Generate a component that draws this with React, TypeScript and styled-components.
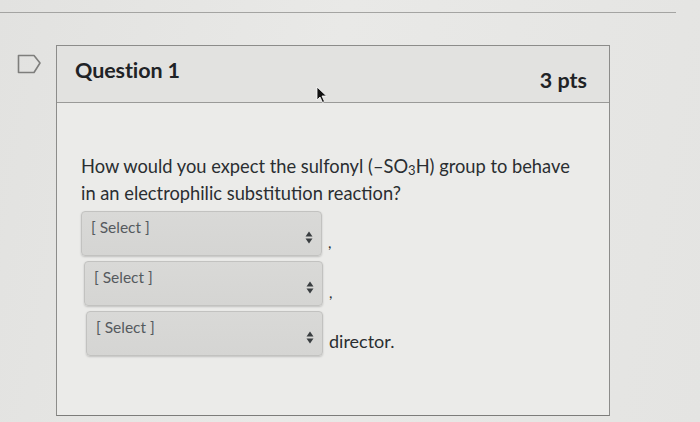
import React from "react";
import styled, { createGlobalStyle } from "styled-components";

const Global = createGlobalStyle`
  html, body { margin: 0; padding: 0; }
  body {
    width: 700px;
    height: 422px;
    overflow: hidden;
    background: #e4e4e2;
    font-family: Lato, "Open Sans", sans-serif;
    color: #2d3b45;
  }
`;

const Page = styled.div`
  position: relative;
  width: 700px;
  height: 422px;
  padding-top: 12px;
  box-sizing: border-box;
  background: linear-gradient(100deg, #e2e2e0 0%, #e9e9e7 45%, #e4e4e2 100%);
`;

const TopRule = styled.div`
  width: 676px;
  height: 1px;
  background: #a4a4a2;
`;

const Row = styled.div`
  display: flex;
  align-items: flex-start;
  margin-top: 32px;
`;

const FlagCol = styled.div`
  width: 56px;
  display: flex;
  justify-content: center;
  padding-top: 9px;
  padding-left: 3px;
  box-sizing: border-box;
`;

const Card = styled.section`
  width: 554px;
  height: 371px;
  border: 1px solid #8c8c8a;
  border-bottom-color: #7c7c7a;
  background: #ebebe9;
  box-sizing: border-box;
  display: flex;
  flex-direction: column;
`;

const Header = styled.header`
  height: 57px;
  flex: none;
  display: flex;
  align-items: center;
  justify-content: space-between;
  padding: 0 22px 0 18px;
  background: #e2e2e0;
  border-bottom: 1px solid #9a9a98;
  box-sizing: border-box;
`;

const Title = styled.h2`
  margin: 0;
  font-size: 21.5px;
  font-weight: 700;
  color: #1f2326;
  letter-spacing: -0.1px;
  transform: translateY(-4px);
`;

const Points = styled.span`
  font-size: 21.5px;
  font-weight: 700;
  color: #1f2326;
  transform: translateY(6px);
`;

const Body = styled.div`
  padding: 52px 0 0 24px;
  display: flex;
  flex-direction: column;
`;

const Prompt = styled.p`
  margin: 0;
  font-size: 18.3px;
  line-height: 23px;
  color: #2a2e31;
`;

const Selects = styled.div`
  margin-top: 6px;
  display: flex;
  flex-direction: column;
  gap: 5px;
`;

const SelectRow = styled.div<{ $indent: number }>`
  display: flex;
  align-items: flex-end;
  padding-left: ${(p) => p.$indent}px;
`;

const SelectBox = styled.div<{ $width: number }>`
  width: ${(p) => p.$width}px;
  height: 45px;
  box-sizing: border-box;
  border: 1px solid #c2c2c0;
  border-radius: 4px;
  background: linear-gradient(180deg, #d9d9d7 0%, #d5d5d3 100%);
  box-shadow: 0 1px 2px rgba(0, 0, 0, 0.18);
  display: flex;
  align-items: flex-start;
  justify-content: space-between;
  padding: 6px 8px 0 9px;
`;

const SelectText = styled.span`
  font-size: 15.5px;
  color: #555a5e;
  line-height: 19px;
`;

const Arrows = styled.svg`
  margin-top: 13px;
  flex: none;
`;

const After = styled.span<{ $size: number }>`
  font-size: ${(p) => p.$size}px;
  color: #2a2e31;
  margin-left: 6px;
  line-height: 1;
  padding-bottom: 6px;
`;

const Cursor = styled.svg`
  position: absolute;
  left: 316px;
  top: 86px;
`;

const Flag = () => (
  <svg width="25" height="20" viewBox="0 0 25 20">
    <path
      d="M1.5 1.5 H17 L23 9 L17 18.5 H1.5 Z"
      fill="none"
      stroke="#7e7e7c"
      strokeWidth="1.6"
      strokeLinejoin="round"
    />
  </svg>
);

const SortIcon = () => (
  <Arrows width="8" height="13" viewBox="0 0 8 13">
    <path d="M4 0.5 L7.5 5.5 H0.5 Z" fill="#3a3e41" />
    <path d="M4 12.5 L7.5 7.5 H0.5 Z" fill="#3a3e41" />
  </Arrows>
);

const selects = [
  { indent: 0, width: 241, after: ",", size: 15 },
  { indent: 3, width: 239, after: ",", size: 15 },
  { indent: 5, width: 237, after: "director.", size: 18 },
];

export default function App() {
  return (
    <Page>
      <Global />
      <TopRule />
      <Row>
        <FlagCol>
          <Flag />
        </FlagCol>
        <Card>
          <Header>
            <Title>Question 1</Title>
            <Points>3 pts</Points>
          </Header>
          <Body>
            <Prompt>
              How would you expect the sulfonyl (–SO<sub style={{ fontSize: "13px", verticalAlign: "-2px" }}>3</sub>H) group to behave
              <br />
              in an electrophilic substitution reaction?
            </Prompt>
            <Selects>
              {selects.map((s, i) => (
                <SelectRow key={i} $indent={s.indent}>
                  <SelectBox $width={s.width}>
                    <SelectText>[ Select ]</SelectText>
                    <SortIcon />
                  </SelectBox>
                  <After $size={s.size}>{s.after}</After>
                </SelectRow>
              ))}
            </Selects>
          </Body>
        </Card>
      </Row>
      <Cursor width="12" height="18" viewBox="0 0 12 18">
        <path d="M1 1 L1 14 L4 11 L6.5 16.5 L8.5 15.5 L6 10 L10.5 10 Z" fill="#111" stroke="#fff" strokeWidth="0.8" />
      </Cursor>
    </Page>
  );
}
